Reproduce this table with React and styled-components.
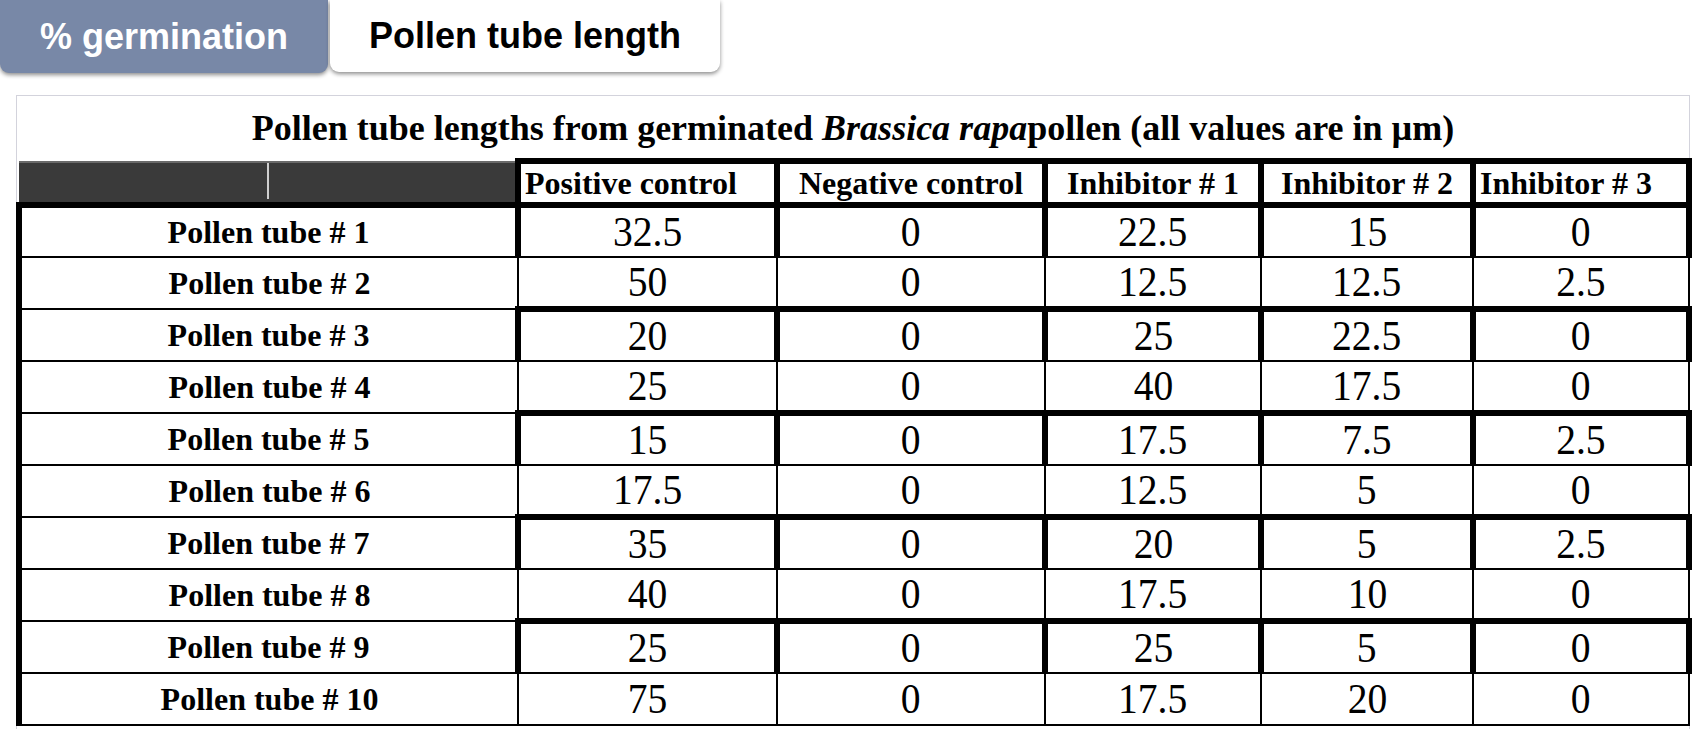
import React from "react";
import styled, { createGlobalStyle } from "styled-components";

const GlobalStyle = createGlobalStyle`
  html, body { margin: 0; padding: 0; background: #ffffff; }
  body { font-family: "Liberation Serif", "Times New Roman", serif; }
`;

const Page = styled.div`
  width: 1695px;
  overflow: hidden;
`;

const TabBar = styled.div`
  display: flex;
  gap: 2px;
  height: 73px;
  align-items: flex-start;
`;

const Tab = styled.button`
  height: ${(p) => (p.$active ? "72px" : "73px")};
  padding: 0 ${(p) => (p.$active ? "39px" : "40px")};
  border: none;
  border-radius: 0 0 9px 9px;
  background: ${(p) => (p.$active ? "#ffffff" : "#7888a7")};
  color: ${(p) => (p.$active ? "#000000" : "#ffffff")};
  box-shadow: 0 2px 4px rgba(0, 0, 0, 0.45);
  font-family: "Liberation Sans", Arial, sans-serif;
  font-weight: 700;
  font-size: 36px;
  cursor: pointer;
`;

const Panel = styled.div`
  margin: 22px 0 0 16px;
  width: 1672px;
  border: 1px solid #d3d3dc;
  padding-bottom: 20px;
`;

const Title = styled.div`
  height: 62px;
  display: flex;
  align-items: center;
  justify-content: center;
  font-size: 36px;
  font-weight: 700;
  color: #000;
  padding-top: 2px;
  box-sizing: border-box;
  white-space: nowrap;
`;

const Table = styled.table`
  border-collapse: collapse;
  table-layout: fixed;
  width: 1670px;
  margin-left: -1px;
  font-family: "Liberation Serif", "Times New Roman", serif;
  color: #000;
`;

const DarkCell = styled.th`
  background: #3a3a3a;
  padding: 0;
  border: none;
  height: 38px;
  vertical-align: top;
`;

const DarkSplit = styled.div`
  display: flex;
  height: 38px;
  border-top: 2px solid #6a6a6a;
  box-sizing: border-box;
`;

const DarkHalf = styled.div`
  width: 248px;
  border-right: 2px solid #cfcfcf;
`;

const HeadCell = styled.th`
  border: 6px solid #000;
  height: 38px;
  padding: 0 ${(p) => (p.$left ? "4px" : "0")};
  text-align: ${(p) => (p.$left ? "left" : "center")};
  font-size: 32px;
  line-height: 38px;
  font-weight: 700;
  white-space: nowrap;
  background: #fff;
`;

const Row = styled.tr`
  height: 52px;
`;

const LabelCell = styled.td`
  border: 2px solid #000;
  border-left: 6px solid #000;
  ${(p) => (p.$first ? "border-top: 6px solid #000;" : "")}
  text-align: center;
  font-size: 32px;
  line-height: 40px;
  font-weight: 700;
  padding: 0;
  white-space: nowrap;
`;

const DataCell = styled.td`
  border: 2px solid #000;
  ${(p) =>
    p.$heavy
      ? "border-top: 6px solid #000; border-left: 6px solid #000; border-right: 6px solid #000;"
      : ""}
  text-align: center;
  font-size: 43px;
  line-height: 40px;
  padding: 0;
  white-space: nowrap;
`;

const Num = styled.span`
  display: inline-block;
  transform: scaleX(0.92);
`;

const columns = [
  { label: "Positive control", left: true, width: 259 },
  { label: "Negative control", width: 268 },
  { label: "Inhibitor # 1", width: 216 },
  { label: "Inhibitor # 2", width: 212 },
  { label: "Inhibitor # 3", left: true, width: 216 },
];

const rows = [
  [32.5, 0, 22.5, 15, 0],
  [50, 0, 12.5, 12.5, 2.5],
  [20, 0, 25, 22.5, 0],
  [25, 0, 40, 17.5, 0],
  [15, 0, 17.5, 7.5, 2.5],
  [17.5, 0, 12.5, 5, 0],
  [35, 0, 20, 5, 2.5],
  [40, 0, 17.5, 10, 0],
  [25, 0, 25, 5, 0],
  [75, 0, 17.5, 20, 0],
];

export default function App() {
  return (
    <Page>
      <GlobalStyle />
      <TabBar>
        <Tab>% germination</Tab>
        <Tab $active>Pollen tube length</Tab>
      </TabBar>
      <Panel>
        <Title>
          Pollen tube lengths from germinated&nbsp;<i>Brassica rapa</i>pollen (all values are in µm)
        </Title>
        <Table>
          <colgroup>
            <col style={{ width: 499 }} />
            {columns.map((c) => (
              <col key={c.label} style={{ width: c.width }} />
            ))}
          </colgroup>
          <thead>
            <tr>
              <DarkCell>
                <DarkSplit>
                  <DarkHalf />
                </DarkSplit>
              </DarkCell>
              {columns.map((c) => (
                <HeadCell key={c.label} $left={c.left}>
                  {c.label}
                </HeadCell>
              ))}
            </tr>
          </thead>
          <tbody>
            {rows.map((r, i) => (
              <Row key={i}>
                <LabelCell $first={i === 0}>Pollen tube # {i + 1}</LabelCell>
                {r.map((v, j) => (
                  <DataCell key={j} $heavy={i % 2 === 0}>
                    <Num>{v}</Num>
                  </DataCell>
                ))}
              </Row>
            ))}
          </tbody>
        </Table>
      </Panel>
    </Page>
  );
}
